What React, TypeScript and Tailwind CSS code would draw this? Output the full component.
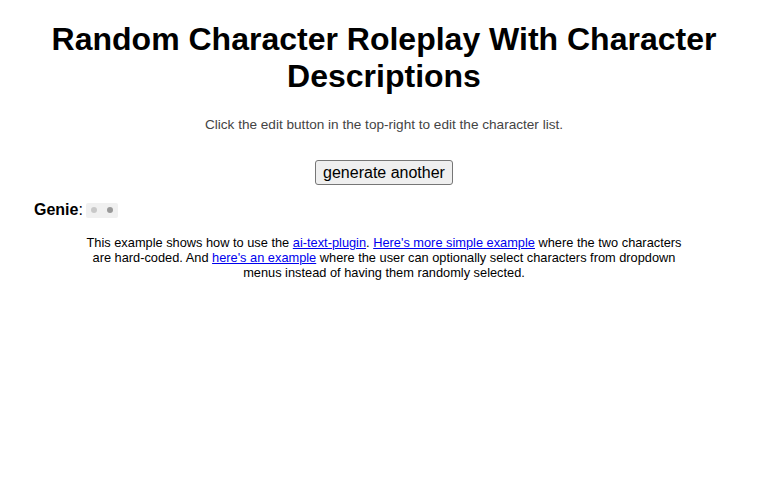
export default function App() {
  return (
    <div className="min-h-[480px] bg-white text-black" style={{ fontFamily: '"Liberation Sans", Arial, sans-serif' }}>
      <h1 className="mx-auto pt-[21px] text-center text-[32px] font-bold leading-[37px]">
        Random Character Roleplay With Character
        <br />
        Descriptions
      </h1>
      <p className="mt-[22px] text-center text-[13.6px] leading-[15px] text-[#444]">
        Click the edit button in the top-right to edit the character list.
      </p>
      <div className="mt-[28px] flex justify-center">
        <button className="h-[25px] rounded-[3px] border border-[#767676] bg-[#efefef] px-[7px] text-[16px] leading-[19px] text-black">
          generate another
        </button>
      </div>
      <div className="mt-[16px] flex items-center pl-[34px] text-[16px] leading-[18px]">
        <span className="font-bold">Genie</span>
        <span>:</span>
        <span className="ml-[3px] flex h-[15px] w-[32px] items-center justify-center gap-[10px] rounded-[2px] bg-[#f0f0f0]">
          <span className="h-[6px] w-[6px] rounded-full bg-[#c8c8c8]" />
          <span className="h-[6px] w-[6px] rounded-full bg-[#999]" />
        </span>
      </div>
      <p className="mx-auto mt-[16px] max-w-[602px] text-center text-[12.8px] leading-[15px]">
        This example shows how to use the{" "}
        <a href="#" className="text-[#0000ee] underline">ai-text-plugin</a>.{" "}
        <a href="#" className="text-[#0000ee] underline">Here's more simple example</a> where the two characters are
        hard-coded. And <a href="#" className="text-[#0000ee] underline">here's an example</a> where the user can
        optionally select characters from dropdown menus instead of having them randomly selected.
      </p>
    </div>
  );
}
